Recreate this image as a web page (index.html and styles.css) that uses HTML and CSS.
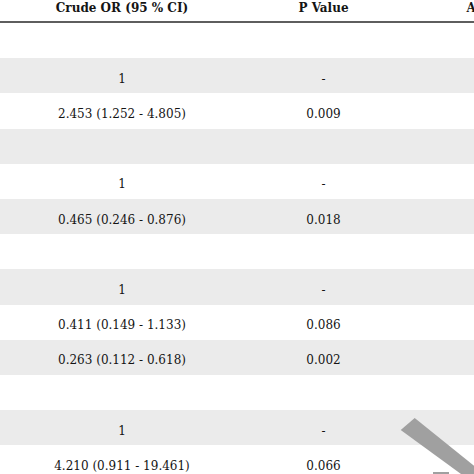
FILE: index.html
```html
<!DOCTYPE html>
<html lang="en">
<head>
<meta charset="utf-8">
<title>Crude OR table</title>
<link rel="stylesheet" href="styles.css">
</head>
<body>
<div class="frame">
  <div class="table">
    <div class="row head">
      <div class="cell">Crude OR (95 % CI)</div>
      <div class="cell">P Value</div>
      <div class="cell">Adjusted OR (95 % CI)</div>
    </div>
    <div class="row"><div class="cell"></div><div class="cell"></div><div class="cell"></div></div>
    <div class="row alt"><div class="cell">1</div><div class="cell">-</div><div class="cell"></div></div>
    <div class="row"><div class="cell">2.453 (1.252 - 4.805)</div><div class="cell">0.009</div><div class="cell"></div></div>
    <div class="row alt"><div class="cell"></div><div class="cell"></div><div class="cell"></div></div>
    <div class="row"><div class="cell">1</div><div class="cell">-</div><div class="cell"></div></div>
    <div class="row alt"><div class="cell">0.465 (0.246 - 0.876)</div><div class="cell">0.018</div><div class="cell"></div></div>
    <div class="row"><div class="cell"></div><div class="cell"></div><div class="cell"></div></div>
    <div class="row alt"><div class="cell">1</div><div class="cell">-</div><div class="cell"></div></div>
    <div class="row"><div class="cell">0.411 (0.149 - 1.133)</div><div class="cell">0.086</div><div class="cell"></div></div>
    <div class="row alt"><div class="cell">0.263 (0.112 - 0.618)</div><div class="cell">0.002</div><div class="cell"></div></div>
    <div class="row"><div class="cell"></div><div class="cell"></div><div class="cell"></div></div>
    <div class="row alt"><div class="cell">1</div><div class="cell">-</div><div class="cell"></div></div>
    <div class="row"><div class="cell">4.210 (0.911 - 19.461)</div><div class="cell">0.066</div><div class="cell"></div></div>
  </div>
  <svg class="overlay" width="474" height="474" viewBox="0 0 474 474" aria-hidden="true">
    <polygon class="bar" points="414.7,418 474,465.7 474,474 461,474 400.7,430"/>
    <rect class="bar" x="433" y="472" width="16" height="2"/>
  </svg>
</div>
</body>
</html>
```
FILE: styles.css
```css
html, body {
  margin: 0;
  padding: 0;
  background: #ffffff;
}

.frame {
  position: relative;
  width: 474px;
  height: 474px;
  overflow: hidden;
}

.table {
  width: 681px;
  font-family: "DejaVu Serif", "Liberation Serif", serif;
  font-size: 12px;
  color: #141414;
}

.row {
  display: grid;
  grid-template-columns: 244px 159px 278px;
  height: 35.2px;
  align-items: center;
}

.row .cell {
  text-align: center;
  white-space: nowrap;
  padding-top: 6px;
}

.row.alt {
  background: #ebebeb;
}

.row.head {
  height: 21px;
  align-items: start;
  border-bottom: 2px solid #5e5e5e;
  font-size: 12px;
  font-weight: bold;
  color: #141414;
}

.row.head .cell {
  padding-top: 1px;
}

.overlay {
  position: absolute;
  top: 0;
  left: 0;
  pointer-events: none;
}

.bar {
  fill: #a0a0a0;
}
```
